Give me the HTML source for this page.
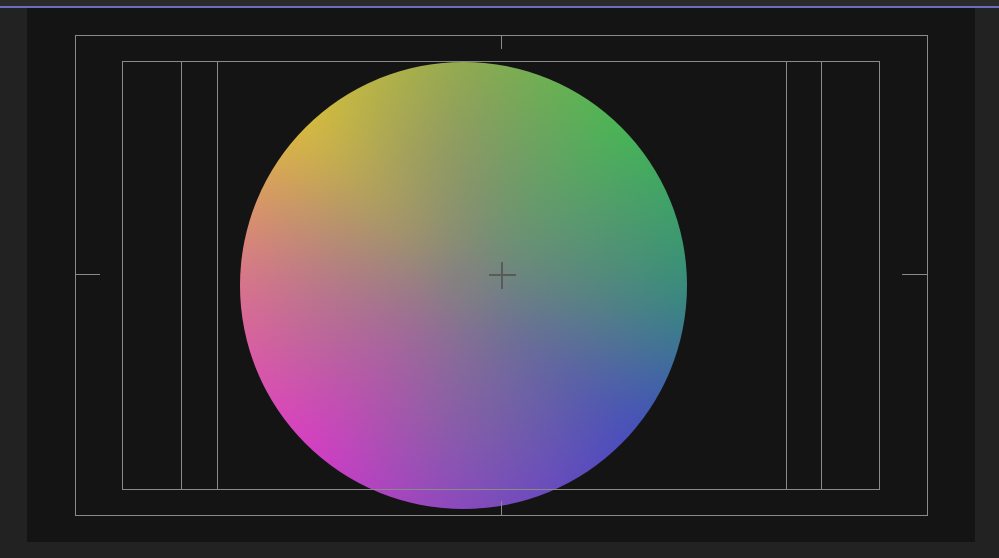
<!DOCTYPE html>
<html><head><style>
html,body{margin:0;padding:0;}
body{width:999px;height:558px;background:#222;position:relative;overflow:hidden;}
.top{position:absolute;left:0;top:0;width:999px;height:6px;background:#2a2a2a;}
.pl{position:absolute;left:0;top:6px;width:999px;height:2px;background:#6b6fc0;}
.main{position:absolute;left:27px;top:8px;width:948px;height:534px;background:#141414;}
.circ{position:absolute;left:240px;top:62px;width:447px;height:447px;border-radius:50%;overflow:hidden;}
.cg{position:absolute;left:-60px;top:-60px;right:-60px;bottom:-60px;filter:blur(25px);
background:conic-gradient(from 0deg,#95b048 0deg,#3cc04c 45deg,#2a9078 90deg,#3a44c8 130deg,#8840c8 180deg,#e830d0 225deg,#e87090 270deg,#e8c830 315deg,#95b048 360deg);}
.circ:after{content:"";position:absolute;inset:0;border-radius:50%;background:radial-gradient(circle,rgba(128,128,130,.9) 0%,rgba(128,128,130,.45) 45%,rgba(128,128,130,0) 85%);}
.r{position:absolute;border:1px solid #8a8a8a;box-sizing:border-box;}
.l{position:absolute;background:#8a8a8a;}
</style></head><body>
<div class="top"></div><div class="pl"></div>
<div class="main"></div>
<div class="circ"><div class="cg"></div></div>
<div class="r" style="left:75px;top:35px;width:853px;height:481px"></div>
<div class="r" style="left:122px;top:61px;width:758px;height:429px"></div>
<div class="l" style="left:181px;top:61px;width:1px;height:429px"></div>
<div class="l" style="left:217px;top:61px;width:1px;height:429px"></div>
<div class="l" style="left:786px;top:61px;width:1px;height:429px"></div>
<div class="l" style="left:821px;top:61px;width:1px;height:429px"></div>
<div class="l" style="left:501px;top:35px;width:1px;height:14px"></div>
<div class="l" style="left:501px;top:501px;width:1px;height:14px"></div>
<div class="l" style="left:75px;top:274px;width:25px;height:1px"></div>
<div class="l" style="left:902px;top:274px;width:25px;height:1px"></div>
<div class="l" style="left:501px;top:262px;width:2px;height:27px;background:#5a5a5a"></div>
<div class="l" style="left:489px;top:274px;width:27px;height:2px;background:#5a5a5a"></div>
</body></html>
